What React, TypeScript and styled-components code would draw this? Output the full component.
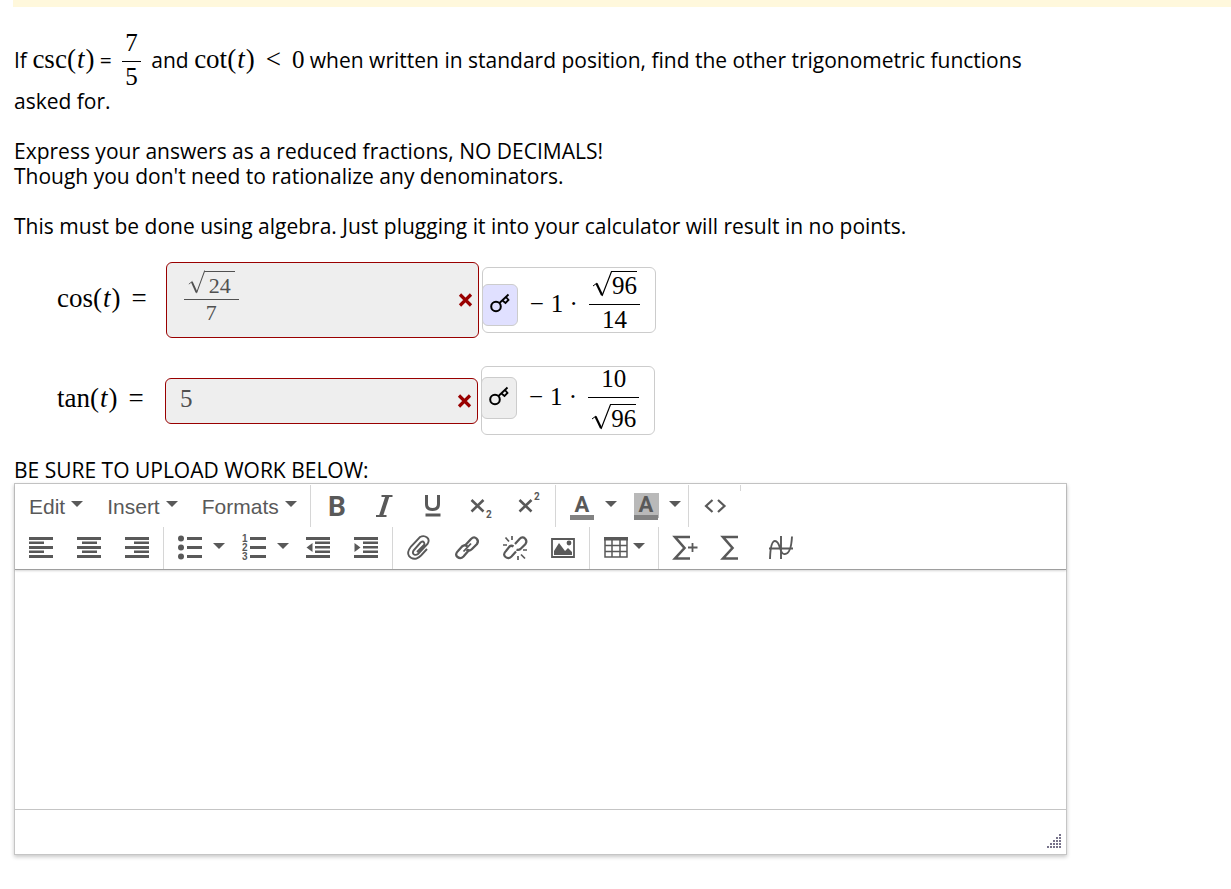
import React from "react";
import styled, { createGlobalStyle } from "styled-components";

const INK = "#595959";
const WRONG = "#990000";

const GlobalStyle = createGlobalStyle`
  *, *::before, *::after { box-sizing: border-box; }
  body {
    margin: 0;
    background: #fff;
    color: #000;
    font-family: "Trebuchet MS", "Open Sans", "Noto Sans", sans-serif;
    font-size: 21px;
    line-height: 25px;
  }
  button { font: inherit; color: inherit; background: none; border: 0; padding: 0; cursor: pointer; }
  svg { flex: none; overflow: visible; }
`;

const Notice = styled.div`
  height: 7px;
  margin-left: 13px;
  background: #fff8dc;
`;

const Main = styled.main`
  max-width: 1067px;
  padding: 28px 0 34px 14px;
`;

const Prompt = styled.p`
  margin: 0 0 25px;
`;

const LastPrompt = styled(Prompt)`
  margin-bottom: 23px;
`;

const MathText = styled.span<{ $size?: number }>`
  font-family: "Liberation Serif", "Times New Roman", serif;
  font-size: ${(p) => p.$size ?? 25}px;
  line-height: 25px;
  white-space: nowrap;
`;

const Variable = styled.i`
  padding: 0 1px;
`;

const Relation = styled.span`
  margin: 0 11px;
`;

const FractionBox = styled.span<{ $half: number; $margin: number }>`
  display: inline-grid;
  grid-template-rows: ${(p) => p.$half}px ${(p) => p.$half}px;
  justify-items: center;
  vertical-align: middle;
  margin: 0 ${(p) => p.$margin}px;
`;

const Numerator = styled.span<{ $raise: number; $pad: number }>`
  display: flex;
  align-items: flex-end;
  justify-content: center;
  width: 100%;
  padding: 0 ${(p) => p.$pad}px ${(p) => p.$raise}px;
  border-bottom: 1px solid currentColor;
`;

const Denominator = styled.span<{ $drop: number; $pad: number }>`
  display: flex;
  align-items: flex-start;
  justify-content: center;
  padding: ${(p) => p.$drop}px ${(p) => p.$pad}px 0;
`;

const Root = styled.span`
  display: inline-flex;
`;

const Radicand = styled.span<{ $inset: number }>`
  margin-top: 3px;
  padding: 1px ${(p) => p.$inset}px 0;
  border-top: 1px solid currentColor;
`;

const AnswerRow = styled.div`
  display: flex;
  align-items: center;
  margin: 0 0 28px 43px;
`;

const AnswerLabel = styled.label`
  min-width: 100px;
  margin-right: 8px;
  padding-bottom: 3px;
`;

const AnswerField = styled.div<{ $tall?: boolean }>`
  position: relative;
  display: flex;
  align-items: center;
  justify-content: space-between;
  width: 313px;
  height: ${(p) => (p.$tall ? 76 : 46)}px;
  padding: 0 5px 0 ${(p) => (p.$tall ? 17 : 14)}px;
  border: 1px solid ${WRONG};
  border-radius: 6px;
  background: #eee;
  color: #505050;
`;

const FieldInput = styled.input`
  flex: 1;
  min-width: 0;
  height: 100%;
  padding: 0 0 3px;
  border: 0;
  outline: 0;
  background: none;
  color: inherit;
  font-family: "Liberation Serif", "Times New Roman", serif;
  font-size: 25px;
`;

const MathInput = styled.textarea`
  position: absolute;
  inset: 0;
  width: 100%;
  height: 100%;
  opacity: 0;
  resize: none;
`;

const KeyBox = styled.div<{ $above: number; $below: number }>`
  display: flex;
  align-items: center;
  margin-left: 3px;
  padding: ${(p) => p.$above}px 15px ${(p) => p.$below}px 0;
  border: 1px solid #ccc;
  border-radius: 6px;
`;

const KeyButton = styled.button<{ $active?: boolean }>`
  display: flex;
  align-items: center;
  justify-content: center;
  width: 36px;
  height: 42px;
  margin: 0 12px 0 -1px;
  padding-bottom: 4px;
  border: 1px solid #ccc;
  border-radius: 6px;
  background: ${(p) => (p.$active ? "#e0e0ff" : "#eee")};
`;

const Factor = styled(MathText)`
  margin-right: 11px;
  padding-bottom: 3px;
`;

const Minus = styled.span`
  margin-right: 7px;
`;

const UploadNote = styled.p`
  margin: -5px 0 0;
`;

const Editor = styled.section`
  border: 1px solid #c5c5c5;
  box-shadow: 0 2px 4px rgba(0, 0, 0, 0.22);
  color: ${INK};
  font-family: "Liberation Sans", Arial, sans-serif;
`;

const Toolbar = styled.div`
  padding-top: 1px;
  border-bottom: 1px solid #9e9e9e;
  box-shadow: 0 1px 2px rgba(0, 0, 0, 0.16);
`;

const ToolRow = styled.div`
  display: flex;
  height: 42px;
`;

const ToolGroup = styled.div<{ $last?: boolean }>`
  display: flex;
  padding: 0 2px;
  border-right: ${(p) => (p.$last ? "0" : "1px solid #d6d6d6")};
`;

const RowEnd = styled.span`
  width: 2px;
  height: 6px;
  border-right: 1px solid #d6d6d6;
`;

const MenuButton = styled.button`
  display: flex;
  align-items: center;
  gap: 6px;
  padding: 0 12px;
  font-size: 21px;

  &:last-child {
    padding-right: 11px;
  }
`;

const ToolButton = styled.button`
  display: flex;
  align-items: center;
  justify-content: center;
  width: 48px;
`;

const SplitButton = styled.button<{ $gap?: number }>`
  display: flex;
  align-items: center;
  gap: ${(p) => p.$gap ?? 10}px;
  width: 64px;
  padding-left: 11px;
`;

const EditArea = styled.textarea`
  display: block;
  width: 100%;
  height: 239px;
  padding: 8px;
  border: 0;
  outline: 0;
  resize: none;
  background: transparent;
  font: inherit;
`;

const StatusBar = styled.div`
  display: flex;
  align-items: flex-end;
  justify-content: flex-end;
  height: 45px;
  padding: 0 4px 5px;
  border-top: 1px solid #c5c5c5;
`;

function Fraction(props: {
  top: React.ReactNode;
  bottom: React.ReactNode;
  half?: number;
  pad?: number;
  margin?: number;
  raise?: number;
  drop?: number;
}) {
  const pad = props.pad ?? 3;
  return (
    <FractionBox $half={props.half ?? 27} $margin={props.margin ?? 0}>
      <Numerator $raise={props.raise ?? 6} $pad={pad}>{props.top}</Numerator>
      <Denominator $drop={props.drop ?? 2} $pad={pad}>{props.bottom}</Denominator>
    </FractionBox>
  );
}

function SquareRoot(props: { children: React.ReactNode; inset?: number; small?: boolean }) {
  return (
    <Root>
      <svg width={props.small ? 17 : 20} height={props.small ? 26 : 29} viewBox="0 0 20 29"
        preserveAspectRatio="none" fill="none" stroke="currentColor">
        <path d="M1 18l4-3" strokeWidth="1" />
        <path d="M4.500 15.500L10 27" strokeWidth="2.200" />
        <path d="M10 28L19.500 3.500H20" strokeWidth="1.200" />
      </svg>
      <Radicand $inset={props.inset ?? 0}>{props.children}</Radicand>
    </Root>
  );
}

function Func({ name }: { name: string }) {
  return (
    <>
      {name}(<Variable>t</Variable>)
    </>
  );
}

const Cross = () => (
  <svg width="15" height="14" viewBox="0 0 15 14" role="img" aria-label="Incorrect">
    <path d="M2 1.500L13 12.500M13 1.500L2 12.500" stroke={WRONG} strokeWidth="3.200" fill="none" />
  </svg>
);

const KeyIcon = () => (
  <svg width="20" height="20" viewBox="0 0 20 20" fill="none" stroke="#000" strokeWidth="2">
    <circle cx="6" cy="13.500" r="4.800" />
    <path d="M9.500 10L18.500 1.500M12.500 7.500l3 2.500 3-3-2.500-3" strokeWidth="1.800" />
  </svg>
);

const Caret = () => (
  <svg width="12" height="6" viewBox="0 0 12 6">
    <path d="M0 -2h12L6 4z" fill={INK} />
  </svg>
);

function Icon({ children, line }: { children: React.ReactNode; line?: boolean }) {
  return (
    <svg width="26" height="26" viewBox="-1 -1 26 26"
      fill={line ? "none" : INK} stroke={line ? INK : "none"} strokeWidth="2">
      {children}
    </svg>
  );
}

const Bars = ({ short }: { short: number }) => (
  <Icon>
    <path d="M0 1h24v3H0zM0 10h24v3H0zM0 19h24v3H0z" />
    <path d={`M${short} 5.500h15v2.500h-15zM${short} 14.500h15v2.500h-15z`} />
  </Icon>
);

const Indentation = ({ outward }: { outward?: boolean }) => (
  <Icon>
    <path d="M0 1h24v3H0zM9 5.500h15v2.500H9zM9 10h15v2.500H9zM9 14.500h15v2.500H9zM0 19h24v3H0z" />
    <path d={outward ? "M6.500 7v9L0.500 11.500z" : "M0.500 7v9L6.500 11.500z"} />
  </Icon>
);

const BulletIcon = () => (
  <Icon>
    <circle cx="3" cy="2.500" r="3" /><circle cx="3" cy="11.500" r="3" /><circle cx="3" cy="20.500" r="3" />
    <path d="M9 1h15v3H9zM9 10h15v3H9zM9 19h15v3H9z" />
  </Icon>
);

const NumberIcon = () => (
  <Icon>
    <g fontFamily="Liberation Sans, sans-serif" fontSize="10" fontWeight="700">
      <text x="0" y="6">1</text><text x="0" y="15">2</text><text x="0" y="24">3</text>
    </g>
    <path d="M8 1h16v3H8zM8 10h16v3H8zM8 19h16v3H8z" />
  </Icon>
);

const BoldIcon = () => (
  <Icon><text x="12" y="22" textAnchor="middle" fontFamily="Roboto, sans-serif" fontWeight="700" fontSize="28">B</text></Icon>
);
const ItalicIcon = () => (
  <Icon line>
    <path d="M8.500 2h11M3 22h10.500" strokeWidth="1.800" />
    <path d="M14.500 2L8 22" strokeWidth="4" />
  </Icon>
);
const UnderlineIcon = () => (
  <Icon line>
    <path d="M5.500 1v9q0 5.500 6 5.500t6-5.500V1" strokeWidth="3" />
    <path d="M4.500 21h15" strokeWidth="3" />
  </Icon>
);
const ScriptIcon = ({ up }: { up?: boolean }) => (
  <Icon line>
    <path d="M2.500 6L14.500 17.500M14.500 6L2.500 17.500" strokeWidth="2.600" />
    <text x="17" y={up ? 6 : 24} fontFamily="Roboto, sans-serif" fontSize="10" fontWeight="700" fill={INK} stroke="none">2</text>
  </Icon>
);
const ColorIcon = ({ filled }: { filled?: boolean }) => (
  <Icon>
    {filled && <path d="M0-1h25v25H0z" fill="#b9b9b9" />}
    <path d="M0 21h24v5H0z" fill="#828282" />
    <text x="12" y="18" textAnchor="middle" fontFamily="Roboto, sans-serif" fontWeight="700" fontSize="22">A</text>
  </Icon>
);
const CodeIcon = () => (
  <Icon line><path d="M9.500 6L3 12l6.500 6M15 6l6.500 6L15 18" strokeWidth="2.200" /></Icon>
);
const ClipIcon = () => (
  <Icon line>
    <path d="M14 6L6.500 14.500q-1.500 3 .500 4t4-.500L20.500 8q2.500-4-.500-6.500t-7-.500L4 10.500q-4.500 6-2 9.500t7.500 2.500q2-.500 4.500-3l6-6.500M14 6q2-1 3 .500t0 2.500l-7 7" strokeWidth="1.900" />
  </Icon>
);
const LinkIcon = () => (
  <Icon line>
    <g strokeWidth="2.300">
      <path d="M10 9.500l6-6.500q3-3 5.500-.500t.500 5.500L17 13q-3 3-5.500.500" />
      <path d="M14.500 13.500l-6 7q-3 3-6 .500t.500-6L7 10.500q3-2.500 5.500 0" />
      <path d="M8.500 15.500l7.500-8" strokeWidth="1.800" />
    </g>
  </Icon>
);
const UnlinkIcon = () => (
  <Icon line>
    <g strokeWidth="2.200">
      <path d="M12 8l4.500-5q3-3 5.500-.500t.500 5.500L17.500 13q-2 1.500-4 .500" />
      <path d="M13 15.500l-4.500 5q-3 3-6 .500t.500-6L6.500 10.500q2-1.500 4 0" />
    </g>
    <path d="M9 0v4M2.500 1.500L6 5.500M0 9h4M15 20v4M18 18.500l4 4M20 14h4" strokeWidth="1.700" />
  </Icon>
);
const ImageIcon = () => (
  <Icon>
    <path d="M1 3h22v18H1z" fill="none" stroke={INK} strokeWidth="1.800" />
    <path d="M3 19V15l5-8 6 8 3-3 4 4v3z" /><circle cx="18" cy="7" r="2.400" />
  </Icon>
);
const TableIcon = () => (
  <Icon>
    <path d="M1 3h22v18H1zM8 4v17M16 4v17M1 9.500h22M1 15.500h22" fill="none" stroke={INK} strokeWidth="1.500" />
    <path d="M0 1h24v3.500H0z" />
  </Icon>
);
const SumIcon = ({ plus }: { plus?: boolean }) => (
  <Icon line>
    <path d="M17 1H2l9.500 11L2 22.500h15" strokeWidth="2.600" />
    {plus && <path d="M15 11.500h9.500M19.500 7v9" strokeWidth="1.800" />}
  </Icon>
);
const GraphIcon = () => (
  <Icon line>
    <path d="M1 23Q1.500 5 6 5q3 0 5 7t5 6q6 0 7-17.500M12 0v23M0 12.500h24" strokeWidth="1.900" />
  </Icon>
);

const ResizeGrip = () => (
  <svg width="15" height="15" viewBox="0 0 15 15" fill="#77738a">
    {[0, 1, 2, 3, 4].flatMap((row) =>
      Array.from({ length: row + 1 }, (_, i) => (
        <rect key={`${row}-${i}`} x={12 - i * 3} y={row * 3} width="2" height="2" />
      ))
    )}
  </svg>
);

const Tool = ({ label, children }: { label: string; children: React.ReactNode }) => (
  <ToolButton type="button" aria-label={label}>{children}</ToolButton>
);

const Split = ({ label, gap, children }: { label: string; gap?: number; children: React.ReactNode }) => (
  <SplitButton type="button" aria-label={label} $gap={gap}>
    {children}
    <Caret />
  </SplitButton>
);

export default function App() {
  return (
    <>
      <GlobalStyle />
      <Notice />
      <Main>
        <Prompt>
          If <MathText $size={27}><Func name="csc" /></MathText>{" = "}
          <MathText><Fraction margin={5} top="7" bottom="5" /></MathText> and{" "}
          <MathText $size={27}><Func name="cot" /><Relation>&lt;</Relation></MathText>
          <MathText>0</MathText> when written in
          standard position, find the other trigonometric functions asked for.
        </Prompt>
        <Prompt>
          Express your answers as a reduced fractions, NO DECIMALS!
          <br />
          Though you don't need to rationalize any denominators.
        </Prompt>
        <LastPrompt>
          This must be done using algebra. Just plugging it into your calculator will result in no
          points.
        </LastPrompt>

        <AnswerRow>
          <AnswerLabel htmlFor="cos"><MathText $size={27}><Func name="cos" /><Relation>=</Relation></MathText></AnswerLabel>
          <AnswerField $tall>
            <MathText $size={22}>
              <Fraction half={25} pad={4} raise={1} drop={0}
                top={<SquareRoot small inset={4}>24</SquareRoot>} bottom="7" />
            </MathText>
            <Cross />
            <MathInput id="cos" defaultValue="sqrt(24)/7" />
          </AnswerField>
          <KeyBox $above={10} $below={0}>
            <KeyButton type="button" aria-label="Show answer" $active><KeyIcon /></KeyButton>
            <Factor><Minus>−</Minus>1 ·</Factor>
            <MathText><Fraction top={<SquareRoot>96</SquareRoot>} bottom="14" /></MathText>
          </KeyBox>
        </AnswerRow>

        <AnswerRow>
          <AnswerLabel htmlFor="tan"><MathText $size={27}><Func name="tan" /><Relation>=</Relation></MathText></AnswerLabel>
          <AnswerField>
            <FieldInput id="tan" type="text" defaultValue="5" />
            <Cross />
          </AnswerField>
          <KeyBox $above={4} $below={9}>
            <KeyButton type="button" aria-label="Show answer"><KeyIcon /></KeyButton>
            <Factor><Minus>−</Minus>1 ·</Factor>
            <MathText><Fraction drop={3} top="10" bottom={<SquareRoot>96</SquareRoot>} /></MathText>
          </KeyBox>
        </AnswerRow>

        <UploadNote>BE SURE TO UPLOAD WORK BELOW:</UploadNote>
        <Editor aria-label="Work editor">
          <Toolbar role="toolbar">
            <ToolRow>
              <ToolGroup>
                <MenuButton type="button">Edit<Caret /></MenuButton>
                <MenuButton type="button">Insert<Caret /></MenuButton>
                <MenuButton type="button">Formats<Caret /></MenuButton>
              </ToolGroup>
              <ToolGroup>
                <Tool label="Bold"><BoldIcon /></Tool>
                <Tool label="Italic"><ItalicIcon /></Tool>
                <Tool label="Underline"><UnderlineIcon /></Tool>
                <Tool label="Subscript"><ScriptIcon /></Tool>
                <Tool label="Superscript"><ScriptIcon up /></Tool>
              </ToolGroup>
              <ToolGroup>
                <Split label="Text color"><ColorIcon /></Split>
                <Split label="Background color"><ColorIcon filled /></Split>
              </ToolGroup>
              <ToolGroup $last>
                <Tool label="Source code"><CodeIcon /></Tool>
                <RowEnd />
              </ToolGroup>
            </ToolRow>
            <ToolRow>
              <ToolGroup>
                <Tool label="Align left"><Bars short={0} /></Tool>
                <Tool label="Align center"><Bars short={5} /></Tool>
                <Tool label="Align right"><Bars short={9} /></Tool>
              </ToolGroup>
              <ToolGroup>
                <Split label="Bullet list"><BulletIcon /></Split>
                <Split label="Numbered list"><NumberIcon /></Split>
                <Tool label="Decrease indent"><Indentation outward /></Tool>
                <Tool label="Increase indent"><Indentation /></Tool>
              </ToolGroup>
              <ToolGroup>
                <Tool label="Attach file"><ClipIcon /></Tool>
                <Tool label="Insert link"><LinkIcon /></Tool>
                <Tool label="Remove link"><UnlinkIcon /></Tool>
                <Tool label="Insert image"><ImageIcon /></Tool>
              </ToolGroup>
              <ToolGroup>
                <Split label="Table" gap={4}><TableIcon /></Split>
              </ToolGroup>
              <ToolGroup $last>
                <Tool label="Add math"><SumIcon plus /></Tool>
                <Tool label="Add math symbol"><SumIcon /></Tool>
                <Tool label="Add graph"><GraphIcon /></Tool>
              </ToolGroup>
            </ToolRow>
          </Toolbar>
          <EditArea aria-label="Your work" />
          <StatusBar><ResizeGrip /></StatusBar>
        </Editor>
      </Main>
    </>
  );
}
